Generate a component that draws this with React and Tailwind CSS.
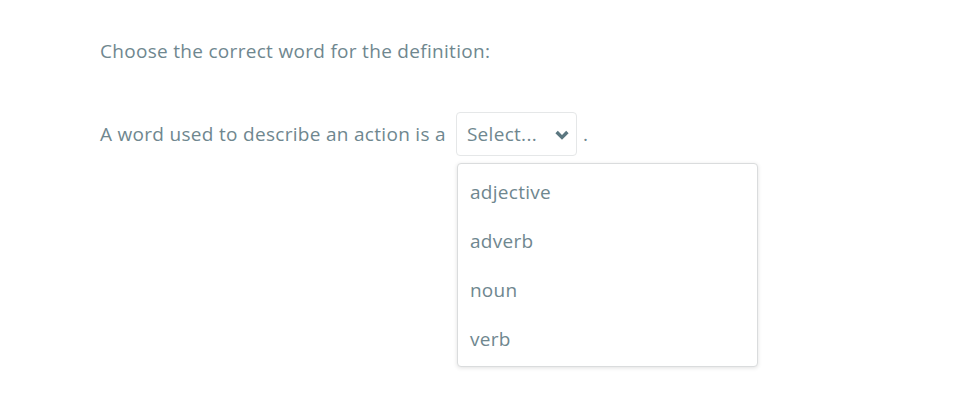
import React from "react";

export default function App() {
  const options = ["adjective", "adverb", "noun", "verb"];
  return (
    <div
      className="w-[954px] h-[418px] bg-white text-[#6f878f] pl-[100px] pt-[38px] text-[19px] tracking-[0.3px]"
      style={{ fontFamily: '"Open Sans", "Noto Sans", sans-serif' }}
    >
      <p className="leading-[26px] m-0">Choose the correct word for the definition:</p>
      <div className="mt-[48px] flex items-start">
        <span className="mt-[9px] leading-[26px] mr-[10px]">A word used to describe an action is a</span>
        <div className="relative">
          <div className="w-[121px] h-[44px] border border-[#e5e7e8] rounded-[4px] flex items-center pl-[10px] pr-[7px] justify-between">
            <span>Select...</span>
            <svg width="14" height="10" viewBox="0 0 14 10" className="mt-[1px] shrink-0">
              <polyline points="1.6,2 7,7.4 12.4,2" fill="none" stroke="#5b7780" strokeWidth="3.4" strokeLinecap="butt" strokeLinejoin="miter" />
            </svg>
          </div>
          <div className="absolute left-[1px] top-[51px] w-[301px] h-[204px] bg-white border border-[#dadcdd] rounded-[4px] shadow-[0_1px_4px_rgba(0,0,0,0.12)] pt-[4px]">
            {options.map((o) => (
              <div key={o} className="h-[49px] flex items-center pl-[12px]">
                {o}
              </div>
            ))}
          </div>
        </div>
        <span className="mt-[9px] leading-[26px] ml-[6px]">.</span>
      </div>
    </div>
  );
}
